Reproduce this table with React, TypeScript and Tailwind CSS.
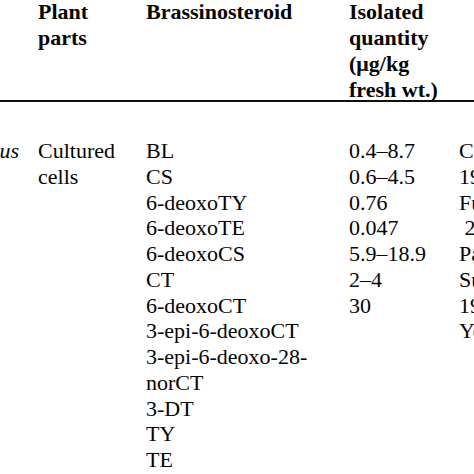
const speciesLines = ["roseus"];
const partLines = ["Cultured", "cells"];
const steroidLines = [
  "BL",
  "CS",
  "6-deoxoTY",
  "6-deoxoTE",
  "6-deoxoCS",
  "CT",
  "6-deoxoCT",
  "3-epi-6-deoxoCT",
  "3-epi-6-deoxo-28-",
  "norCT",
  "3-DT",
  "TY",
  "TE",
];
const quantityLines = ["0.4–8.7", "0.6–4.5", "0.76", "0.047", "5.9–18.9", "2–4", "30"];
const refLines = [
  "Choi et al.",
  "1996",
  "Fujioka et al.",
  "\u00a02000",
  "Park et al.",
  "Suzuki et al.",
  "1995",
  "Yokota et al.",
];

function Lines({ items }: { items: string[] }) {
  return (
    <>
      {items.map((t, i) => (
        <div key={i} className="whitespace-nowrap">
          {t}
        </div>
      ))}
    </>
  );
}

export default function App() {
  return (
    <div
      className="w-[474px] h-[474px] overflow-hidden bg-white text-[#050505] text-[22px]"
      style={{ fontFamily: '"Liberation Serif", "Times New Roman", serif' }}
    >
      {/* header */}
      <div className="flex h-[101px] -mt-px font-bold leading-[26px]">
        <div className="w-[38px] shrink-0" />
        <div className="w-[108px] shrink-0">
          <div>Plant</div>
          <div>parts</div>
        </div>
        <div className="w-[203px] shrink-0">Brassinosteroid</div>
        <div className="w-[110px] shrink-0">
          <div>Isolated</div>
          <div>quantity</div>
          <div>(μg/kg</div>
          <div>fresh wt.)</div>
        </div>
        <div className="flex-1" />
      </div>
      <div className="h-[2px] bg-[#111]" />

      {/* body */}
      <div className="flex pt-[36px] leading-[25.75px]">
        <div className="w-[38px] shrink-0 pr-[19px]">
          <div className="flex justify-end overflow-hidden italic">
            <Lines items={speciesLines} />
          </div>
        </div>
        <div className="w-[108px] shrink-0">
          <Lines items={partLines} />
        </div>
        <div className="w-[203px] shrink-0">
          <Lines items={steroidLines} />
        </div>
        <div className="w-[110px] shrink-0">
          <Lines items={quantityLines} />
        </div>
        <div className="flex-1 overflow-hidden">
          <Lines items={refLines} />
        </div>
      </div>
    </div>
  );
}
